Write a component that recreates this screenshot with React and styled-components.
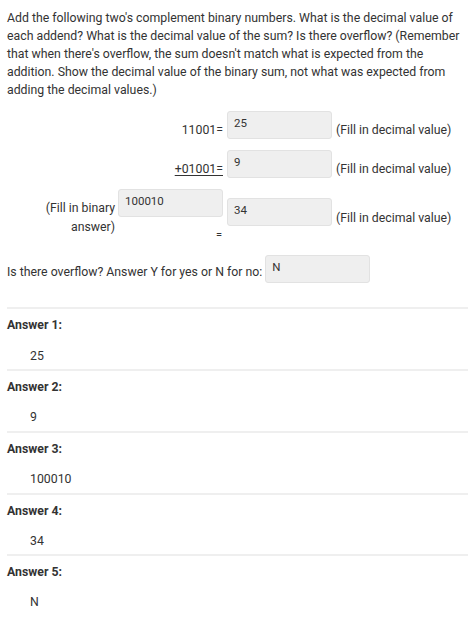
import React from "react";
import styled, { createGlobalStyle } from "styled-components";

const GlobalStyle = createGlobalStyle`
  body {
    margin: 0;
    background: #fff;
    color: #333;
    font-family: Roboto, "Liberation Sans", Arial, sans-serif;
  }
`;

const Page = styled.div`
  padding: 9px 6px 0 7px;
  font-size: 12.3px;
  line-height: 18.1px;
`;

const Question = styled.p`
  margin: 0;
`;

const Sum = styled.div`
  display: grid;
  grid-template-columns: 216px 105px auto;
  column-gap: 4px;
  row-gap: 11px;
  margin-top: 12px;
  align-items: end;
`;

const Label = styled.div`
  text-align: ${(p) => p.$align || "right"};
  text-decoration: ${(p) => (p.$underline ? "underline" : "none")};
  text-underline-offset: 2px;
  margin-top: ${(p) => p.$top || 0}px;
  align-self: ${(p) => (p.$top !== undefined ? "start" : "auto")};
`;

const Field = styled.div`
  box-sizing: border-box;
  width: 105px;
  height: 28px;
  padding: 4px 6px;
  background: #efefef;
  border: 1px solid #e2e2e2;
  border-radius: 3px;
  font-size: 11.5px;
  line-height: 14px;
  color: #333;
  margin-top: ${(p) => p.$top || 0}px;
  align-self: ${(p) => (p.$top !== undefined ? "start" : "auto")};
`;

const BinaryCell = styled.div`
  display: flex;
  justify-content: flex-end;
  align-items: flex-start;
  gap: 3px;
  align-self: start;
`;

const BinaryLabel = styled.div`
  text-align: right;
  width: 80px;
  margin-top: 10px;
`;

const BinaryStack = styled.div`
  display: flex;
  flex-direction: column;
  align-items: flex-end;
`;

const Equals = styled.div`
  font-size: 11px;
  line-height: 18px;
  margin-top: 9px;
  padding-right: 1px;
`;

const Overflow = styled.div`
  display: flex;
  align-items: flex-end;
  gap: 3px;
  margin-top: 11px;
`;

const OverflowText = styled.span`
  margin-bottom: 2px;
`;

const Answers = styled.div`
  margin-top: 24px;
`;

const AnswerBlock = styled.div`
  border-top: 2px solid #efefef;
  padding: 7px 0 4.5px;
`;

const AnswerTitle = styled.div`
  font-weight: 700;
`;

const AnswerValue = styled.div`
  padding-left: 23px;
  margin-top: 12px;
`;

const answers = ["25", "9", "100010", "34", "N"];

export default function App() {
  return (
    <>
      <GlobalStyle />
      <Page>
        <Question>
          Add the following two's complement binary numbers. What is the decimal value of
          each addend? What is the decimal value of the sum? Is there overflow? (Remember
          that when there's overflow, the sum doesn't match what is expected from the
          addition. Show the decimal value of the binary sum, not what was expected from
          adding the decimal values.)
        </Question>

        <Sum>
          <Label>11001=</Label>
          <Field>25</Field>
          <Label $align="left">(Fill in decimal value)</Label>

          <Label $underline>+01001=</Label>
          <Field>9</Field>
          <Label $align="left">(Fill in decimal value)</Label>

          <BinaryCell>
            <BinaryLabel>(Fill in binary answer)</BinaryLabel>
            <BinaryStack>
              <Field>100010</Field>
              <Equals>=</Equals>
            </BinaryStack>
          </BinaryCell>
          <Field $top={9}>34</Field>
          <Label $top={20} $align="left">(Fill in decimal value)</Label>
        </Sum>

        <Overflow>
          <OverflowText>Is there overflow? Answer Y for yes or N for no:</OverflowText>
          <Field>N</Field>
        </Overflow>

        <Answers>
          {answers.map((a, i) => (
            <AnswerBlock key={i}>
              <AnswerTitle>Answer {i + 1}:</AnswerTitle>
              <AnswerValue>{a}</AnswerValue>
            </AnswerBlock>
          ))}
        </Answers>
      </Page>
    </>
  );
}
